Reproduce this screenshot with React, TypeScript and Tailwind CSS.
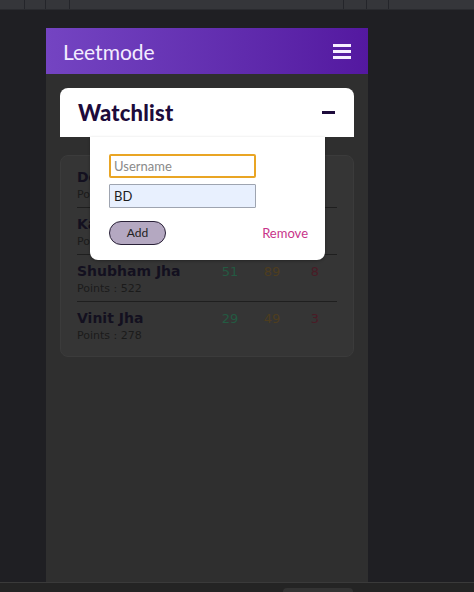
import { useState } from "react";

type Member = {
  name: string;
  points: number;
  easy: number;
  medium: number;
  hard: number;
};

const members: Member[] = [
  { name: "Deepak Singh", points: 640, easy: 60, medium: 95, hard: 12 },
  { name: "Kartik Rao", points: 590, easy: 55, medium: 91, hard: 10 },
  { name: "Shubham Jha", points: 522, easy: 51, medium: 89, hard: 8 },
  { name: "Vinit Jha", points: 278, easy: 29, medium: 49, hard: 3 },
];

const lato = { fontFamily: "Lato, 'Open Sans', sans-serif" };
const dejavu = { fontFamily: "'DejaVu Sans', Verdana, sans-serif" };

function BrowserTabs() {
  // window chrome strip with tab separators
  return (
    <div className="h-[10px] bg-[#35363a] border-b border-[#2a2b2f] flex">
      <div className="w-[25px] border-r border-[#24252a]" />
      <div className="w-[21px] border-r border-[#24252a]" />
      <div className="w-[24px] border-r border-[#24252a]" />
      <div className="w-[274px] border-r border-[#24252a]" />
      <div className="w-[23px] border-r border-[#24252a]" />
      <div className="w-[22px] border-r border-[#24252a]" />
      <div className="flex-1" />
    </div>
  );
}

function Header() {
  return (
    <div className="h-[46px] flex items-center justify-between pl-[17px] pr-[17px] bg-gradient-to-r from-[#7444c2] to-[#5418a0]">
      <span className="text-[21px] text-[#f3ecff] leading-none" style={lato}>
        Leetmode
      </span>
      <div className="flex flex-col gap-[3px]">
        <span className="block w-[18px] h-[3px] bg-[#f6efff]" />
        <span className="block w-[18px] h-[3px] bg-[#f6efff]" />
        <span className="block w-[18px] h-[3px] bg-[#f6efff]" />
      </div>
    </div>
  );
}

function MemberRow({ m, last }: { m: Member; last: boolean }) {
  return (
    <div className={`flex items-start h-[47px] pt-[8px] ${last ? "" : "border-b border-[#1f1f1f]"}`}>
      <div className="flex-1" style={dejavu}>
        <div className="text-[14px] font-bold text-[#13101f] leading-[17px]">{m.name}</div>
        <div className="text-[11px] text-[#1b1b1b] leading-[14px] mt-[2px]">Points : {m.points}</div>
      </div>
      <div className="flex text-[13px] leading-[17px]" style={dejavu}>
        <span className="w-[42px] text-center text-[#245a42]">{m.easy}</span>
        <span className="w-[42px] text-center text-[#4e3d1f]">{m.medium}</span>
        <span className="w-[44px] text-center text-[#4a1b26]">{m.hard}</span>
      </div>
    </div>
  );
}

function AddPopup() {
  const [username, setUsername] = useState("");
  return (
    <div
      className="absolute left-[44px] top-[63px] w-[235px] h-[123px] bg-white rounded-b-[8px] pl-[19px] pr-[17px] pt-[17px] shadow-[0_1px_3px_rgba(0,0,0,0.3)]"
      style={lato}
    >
      <input
        value={username}
        onChange={(e) => setUsername(e.target.value)}
        placeholder="Username"
        className="block w-[147px] h-[24px] px-[3px] text-[13px] text-[#222] placeholder-[#8a8a8a] border-2 border-[#e9a524] rounded-[2px] outline-none"
        style={{ ...lato, caretColor: "#333" }}
      />
      <input
        defaultValue="BD"
        className="block mt-[6px] w-[147px] h-[24px] px-[4px] text-[13px] text-[#1c1c1c] bg-[#e8f0fe] border border-[#9ea4b0] rounded-[1px] outline-none"
        style={lato}
      />
      <div className="flex items-center justify-between mt-[13px]">
        <button
          type="button"
          className="w-[57px] h-[24px] rounded-full bg-[#b4a8c1] border-[1.5px] border-[#2a2238] text-[12px] text-[#222] leading-none"
          style={lato}
        >
          Add
        </button>
        <button type="button" className="text-[13px] text-[#c8348a] leading-none mt-[1px]" style={lato}>
          Remove
        </button>
      </div>
    </div>
  );
}

export default function App() {
  return (
    <div className="w-[474px] h-[592px] bg-[#1f1f23] flex flex-col overflow-hidden">
      <BrowserTabs />
      <div className="flex-1 flex flex-col pt-[18px] pl-[46px]">
        <div className="w-[322px] flex-1 flex flex-col bg-[#2f2f2f]">
          <Header />
          <div className="relative px-[14px] pt-[14px]">
            {/* watchlist heading */}
            <div className="h-[49px] bg-white rounded-t-[8px] flex items-center justify-between pl-[18px] pr-[19px]">
              <span className="text-[22px] font-black text-[#1d0b3b] leading-none tracking-[0.2px]" style={lato}>
                Watchlist
              </span>
              <span className="block w-[13px] h-[3px] bg-[#1d0b3b]" />
            </div>
            {/* dimmed member list */}
            <div className="mt-[18px] bg-[#353535] border border-[#3b3b3b] rounded-[8px] px-[16px] pt-[5px] pb-[7px]">
              {members.map((m, i) => (
                <MemberRow key={m.name} m={m} last={i === members.length - 1} />
              ))}
            </div>
            <AddPopup />
          </div>
        </div>
      </div>
      <div className="h-[10px] bg-[#242424] border-t border-[#3a3a3a] flex items-end">
        <div className="ml-[283px] w-[70px] h-[4px] bg-[#333] rounded-t-[4px]" />
      </div>
    </div>
  );
}
